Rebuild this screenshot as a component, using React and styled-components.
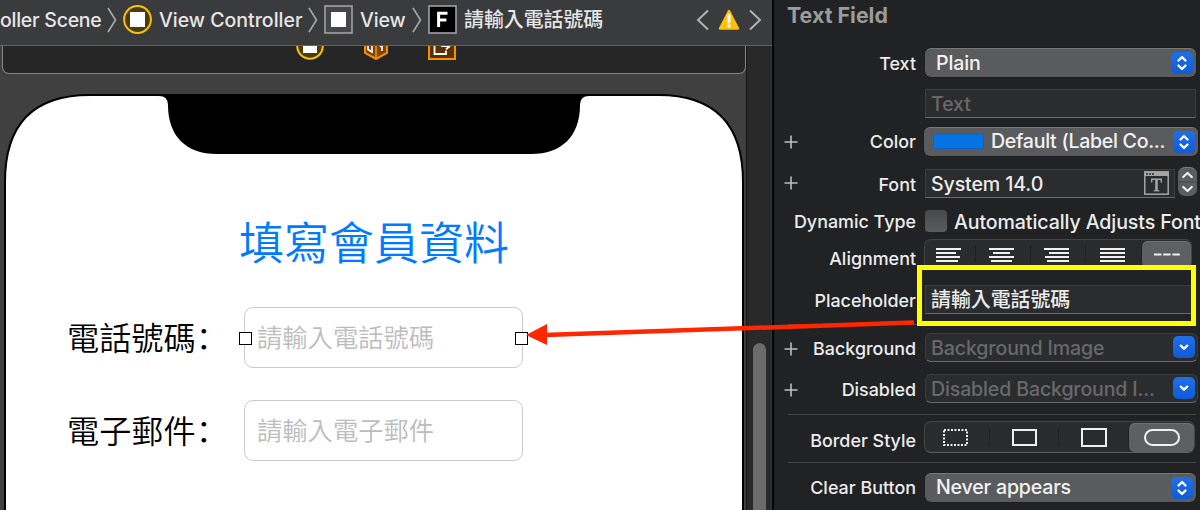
import React from 'react';
import styled, { createGlobalStyle } from 'styled-components';

const GlobalStyle = createGlobalStyle`
  * { box-sizing: border-box; }
  body { margin: 0; overflow: hidden; background: #202124; font-family: Inter, 'Noto Sans CJK TC', sans-serif; }
`;

// --- DATA ---
const fields = [
  { id: 'phone', label: '電話號碼', placeholder: '請輸入電話號碼', selected: true },
  { id: 'mail', label: '電子郵件', placeholder: '請輸入電子郵件' },
];

const alignments = [
  [[0, 25], [0, 20], [0, 24], [0, 22]],
  [[0, 25], [4, 21], [0, 25], [2, 23]],
  [[0, 25], [5, 25], [1, 25], [3, 25]],
  [[0, 25], [0, 25], [0, 25], [0, 25]],
];

// --- PAGE ---
const Window = styled.div`
  display: flex; width: 1200px; height: 510px; overflow: hidden; position: relative;
`;
const Editor = styled.main`
  display: flex; flex-direction: column; width: 774px; border-right: 2px solid #050505; flex: none;
`;
const Workspace = styled.div`
  display: flex; flex: 1; min-height: 0;
`;
const Gutter = styled.div`
  width: 26px; padding: 297px 5px 0 6px; background: #292929; border-left: 1px solid #161616; border-right: 1px solid #353535;
`;
const ScrollThumb = styled.div`
  height: 220px; border-radius: 8px; background: #6b6b6b;
`;

// --- JUMP BAR ---
const JumpBar = styled.nav`
  display: flex; align-items: center; flex: none; height: 46px; padding-bottom: 6px;
  background: #3a3b3d; border-bottom: 1px solid #606163; color: #e6e6e6;
`;
const Crumb = styled.span`
  width: ${p => p.$width}px; flex: none; white-space: nowrap; font-size: ${p => p.$size || 19.5}px; line-height: 24px; font-weight: 500;
  letter-spacing: ${p => p.$spacing || 0}px;
`;
const Chevron = styled.svg`
  width: 10px; height: 26px; flex: none; margin: 0 ${p => p.$right}px 0 6px; fill: none; stroke: #a9a9aa; stroke-width: 1.6;
`;
const SceneIcon = styled.svg`
  width: 29px; height: 29px; flex: none; margin-right: ${p => p.$gap}px;
`;
const IssueNav = styled.div`
  display: flex; align-items: center; gap: 9px; margin-left: auto; margin-right: 10px;
`;

// --- CANVAS ---
const Canvas = styled.section`
  width: 746px; padding-left: 2px; background: #404040; flex: none;
`;
const Dock = styled.div`
  display: flex; height: 28px; padding-left: 292px; background: #262626; width: 744px;
  border: 1.5px solid #858585; border-top: 0; border-radius: 0 0 7px 7px;
`;
const DockIcon = styled.svg`
  width: 30px; height: 14px; flex: none; margin-right: ${p => p.$gap || 0}px;
`;
const Phone = styled.div`
  position: relative; width: 742px; height: 420px; margin-top: 20px; padding-top: 117px;
`;
const PhoneFrame = styled.svg`
  position: absolute; inset: 0; width: 744px; height: 420px;
`;
const Screen = styled.div`
  position: relative; font-family: 'Noto Sans CJK TC', sans-serif; font-weight: 350;
`;
const Heading = styled.h1`
  margin: 0; padding-left: 237px; height: 96px; font-size: 45px; line-height: 60px; font-weight: 350; color: #007aff; white-space: nowrap;
`;
const FormRow = styled.div`
  display: flex; align-items: center; height: 61px; margin-bottom: 32px; padding-left: 65px;
`;
const FieldLabel = styled.label`
  display: flex; width: 177px; flex: none; padding-bottom: 4px; font-size: 32.2px; line-height: 48px; color: #000; white-space: nowrap;
`;
const Colon = styled.span`
  font-family: 'Noto Sans CJK SC', sans-serif; margin-top: -1px;
`;
const FieldBox = styled.div`
  position: relative; display: flex; align-items: center; width: 279px; height: 61px; padding: 0 0 4px 12px;
  border: 1px solid #cbcbcb; border-radius: 9px; font-size: 25.3px; color: #bcbcbc; white-space: nowrap;
`;
const Handle = styled.span`
  position: absolute; top: 24px; ${p => p.$side}: -6px; width: 13px; height: 13px; background: #fff; border: 1.5px solid #000;
`;

// --- INSPECTOR ---
const Inspector = styled.aside`
  display: flex; flex-direction: column; width: 426px; padding-left: 10px; background: #202224; color: #ececec; flex: none; overflow: hidden;
`;
const SectionTitle = styled.h2`
  height: 42px; margin: 0; padding: 3px 0 0 3px; font-size: 21.4px; line-height: 25px; font-weight: 700; color: #9b9b9b; flex: none;
`;
const Row = styled.div`
  display: flex; align-items: center; height: ${p => p.$height}px; flex: none;
`;
const AddMark = styled.svg`
  width: 14px; height: 14px; flex: none; stroke: #bebebe; stroke-width: 1.6; margin-top: ${p => p.$shift || 0}px;
`;
const RowLabel = styled.span`
  flex: none; width: ${p => (p.$marked ? 118 : 132)}px; text-align: right; white-space: nowrap; font-size: 17.9px; line-height: 24px;
  font-weight: 500; padding-top: ${p => p.$drop ?? 2}px;
`;
const Popup = styled.div`
  display: flex; align-items: center; width: ${p => p.$width || 271}px; height: 29px; margin-left: ${p => p.$left || 9}px; padding: 0 3px 0 11px; flex: none;
  background: #5a5b5d; border-top: 1px solid #79797b; border-radius: 6px; box-shadow: 0 0 1px #000; color: #f2f2f2;
`;
const Value = styled.span`
  flex: 1; min-width: 0; white-space: nowrap; font-size: ${p => p.$size || 19.6}px; line-height: 25px; font-weight: 500;
  letter-spacing: ${p => p.$spacing ?? -0.12}px; padding-top: ${p => p.$drop || 0}px;
`;
const BlueCap = styled.svg`
  width: 22px; height: 22px; flex: none; border-radius: 5px; background: linear-gradient(#1f70e8, #0f5bd5);
  fill: none; stroke: #fff; stroke-width: 2.3; stroke-linecap: round; stroke-linejoin: round;
`;
const Swatch = styled.span`
  width: 51px; height: 15px; flex: none; margin: 0 7px 0 -2px; background: #0573e1; border: 1px solid #0868c8;
`;
const Input = styled.div`
  display: flex; align-items: center; width: ${p => p.$width || 271}px; height: 29px; margin-left: 9px; padding: 0 2px 0 5px; flex: none;
  background: #2b2c2e; border: 1px solid #3c3d3f; border-bottom-color: #6a6a6c; border-radius: ${p => (p.$round ? 6 : 0)}px;
  color: ${p => (p.$dim ? '#68696b' : '#ececec')};
`;
const FontIcon = styled.svg`
  width: 25px; height: 24px; flex: none; margin: 0 3px 2px 0;
`;
const Stepper = styled.svg`
  width: 19px; height: 29px; flex: none; margin: -4px 0 0 3px; border-radius: 7px; background: #5c5d5f; border-top: 1px solid #7b7b7d;
  fill: none; stroke: #eee; stroke-width: 2.2; stroke-linecap: round; stroke-linejoin: round;
`;
const CheckBox = styled.span`
  width: 22px; height: 22px; flex: none; margin: -3px 7px 0 9px; border-radius: 4px; background: linear-gradient(#48494b, #5a5b5d);
`;
const Segments = styled.div`
  display: grid; grid-template-columns: ${p => p.$columns}; width: ${p => p.$width}px; height: ${p => p.$height || 31}px; margin-left: 8px; flex: none;
  background: #2a2b2d; border: 1px solid #434446; border-bottom-color: #606062; border-radius: 7px;
`;
const Segment = styled.div`
  display: flex; align-items: center; justify-content: center; padding-right: ${p => p.$nudge || 0}px; margin: ${p => (p.$active ? 1 : 6)}px 0;
  ${p => p.$active && 'background: #5e5f61; border-radius: 6px; box-shadow: inset 0 1px #727274;'}
  & + & { border-left: ${p => (p.$active ? 0 : 1)}px solid #1f2022; }
`;
const Glyph = styled.svg`
  display: block; flex: none; fill: none; stroke: #f0f0f0; stroke-width: 2;
`;
const Divider = styled.hr`
  width: 408px; height: 1px; margin: ${p => p.$top || 0}px 0 0 4px; border: 0; background: #454648; flex: none;
`;

// --- ANNOTATIONS ---
const Arrow = styled.svg`
  position: absolute; left: 524px; top: 315px; width: 392px; height: 34px;
`;
const Highlight = styled.div`
  position: absolute; left: 917px; top: 265px; width: 279px; height: 61px; border: 5px solid #ffff00;
`;

const Separator = ({ right }) => (
  <Chevron $right={right} viewBox="0 0 10 26"><path d="M1 1 L8.5 13 L1 25" /></Chevron>
);

const UpDown = () => (
  <BlueCap viewBox="0 0 22 22"><path d="M7.5 8.5 L11 5 L14.5 8.5 M7.5 13.5 L11 17 L14.5 13.5" /></BlueCap>
);

const Down = () => (
  <BlueCap viewBox="0 0 22 22"><path d="M7.8 9.6 L11 12.7 L14.2 9.6" /></BlueCap>
);

const Plus = ({ shift }) => (
  <AddMark $shift={shift} viewBox="0 0 14 14"><path d="M7 0.5 V13.5 M0.5 7 H13.5" /></AddMark>
);

const TopBar = () => (
  <JumpBar>
    <Crumb $width={101} $spacing={-0.25}>oller Scene</Crumb>
    <Separator right={6} />
    <SceneIcon $gap={7} viewBox="0 0 29 29">
      <circle cx="14.5" cy="14.5" r="13.4" fill="#4a3d0b" stroke="#f8c010" strokeWidth="2" />
      <rect x="7" y="7" width="15" height="15" fill="#fff" />
    </SceneIcon>
    <Crumb $width={143}>View Controller</Crumb>
    <Separator right={6} />
    <SceneIcon $gap={7} viewBox="0 0 29 29">
      <rect x="1" y="1" width="27" height="27" fill="#46464a" stroke="#a0a0a6" strokeWidth="1.6" />
      <rect x="7" y="7" width="15" height="15" fill="#fff" />
    </SceneIcon>
    <Crumb $width={46} $spacing={-0.15}>View</Crumb>
    <Separator right={6} />
    <SceneIcon $gap={7} viewBox="0 0 29 29">
      <rect x="1" y="1" width="27" height="27" fill="#000" stroke="#a0a0a6" strokeWidth="1.6" />
      <path d="M10.6 22 V8.2 H19.5 M10.6 15 H18.4" fill="none" stroke="#fff" strokeWidth="3" />
    </SceneIcon>
    <Crumb $width={150} $size={19.9}>請輸入電話號碼</Crumb>
    <IssueNav>
      <svg width="13" height="22" viewBox="0 0 13 22" fill="none" stroke="#b4b4b5" strokeWidth="1.9"><path d="M12 1.5 L2 11 L12 20.5" /></svg>
      <svg width="22" height="22" viewBox="0 0 22 22">
        <path d="M11 2 L20 19.5 H2 Z" fill="#ffc00a" stroke="#ffc00a" strokeWidth="2.4" strokeLinejoin="round" />
        <path d="M11 6.5 V13" stroke="#fff" strokeWidth="3" strokeLinecap="round" />
        <circle cx="11" cy="17" r="1.7" fill="#fff" />
      </svg>
      <svg width="13" height="22" viewBox="0 0 13 22" fill="none" stroke="#b4b4b5" strokeWidth="1.9"><path d="M1 1.5 L11 11 L1 20.5" /></svg>
    </IssueNav>
  </JumpBar>
);

const SceneDock = () => (
  <Dock>
    <DockIcon $gap={36} viewBox="0 0 30 14">
      <circle cx="15" cy="0" r="12.8" fill="#4a3d0b" stroke="#f8c010" strokeWidth="2" />
      <rect x="8" y="-8" width="14" height="15" fill="#fff" />
    </DockIcon>
    <DockIcon $gap={36} viewBox="0 0 30 14">
      <path d="M4 -8 V7 L15 13 L26 7 V-8 Z" fill="#7b4400" stroke="#f59000" strokeWidth="2" />
      <path d="M15 0 V12" stroke="#f59000" strokeWidth="1.6" />
      <path d="M7 -1 V3.5 L11 6 V-1 M19 1 L21 -1 V5" fill="none" stroke="#fff" strokeWidth="1.6" />
    </DockIcon>
    <DockIcon viewBox="0 0 30 14">
      <rect x="2" y="-14" width="26" height="27" fill="#5a3100" stroke="#f59000" strokeWidth="2" />
      <path d="M7.5 -2 V8 H19 V4.5 M14 0 H22 M19 3.2 L23 0" fill="none" stroke="#fff" strokeWidth="1.8" />
    </DockIcon>
  </Dock>
);

const Device = () => (
  <Phone>
    <PhoneFrame viewBox="0 0 744 420">
      <path d="M3 430 V88 C3 30 32 1 88 1 H656 C712 1 741 30 741 88 V430 Z" fill="#fff" stroke="#000" strokeWidth="2" />
      <path d="M157 0 V2 Q166 2 166 11 C166 42 184 60 215 60 H529 C560 60 578 42 578 11 Q578 2 587 2 V0 Z" fill="#000" />
    </PhoneFrame>
    <Screen>
      <Heading>填寫會員資料</Heading>
      {fields.map(field => (
        <FormRow key={field.id}>
          <FieldLabel>{field.label}<Colon>：</Colon></FieldLabel>
          <FieldBox>
            {field.placeholder}
            {field.selected && <><Handle $side="left" /><Handle $side="right" /></>}
          </FieldBox>
        </FormRow>
      ))}
    </Screen>
  </Phone>
);

const Attributes = () => (
  <Inspector>
    <SectionTitle>Text Field</SectionTitle>
    <Row $height={41}>
      <RowLabel>Text</RowLabel>
      <Popup><Value>Plain</Value><UpDown /></Popup>
    </Row>
    <Row $height={41}>
      <RowLabel />
      <Input $dim><Value $drop={1}>Text</Value></Input>
    </Row>
    <Row $height={34}>
      <Plus shift={2} />
      <RowLabel $marked>Color</RowLabel>
      <Popup $width={274} $left={8}><Swatch /><Value $spacing={-0.3}>Default (Label Co...</Value><UpDown /></Popup>
    </Row>
    <Row $height={51}>
      <Plus shift={-1} />
      <RowLabel $marked>Font</RowLabel>
      <Input $width={250}>
        <Value $drop={2}>System 14.0</Value>
        <FontIcon viewBox="0 0 25 24">
          <rect x="0.8" y="0.8" width="23.4" height="22.4" fill="none" stroke="#a5a5a5" strokeWidth="1.5" />
          <path d="M1 3 H24" stroke="#a5a5a5" strokeWidth="4" />
          <path d="M2 3 H10" stroke="#2b2c2e" strokeWidth="1.6" strokeDasharray="2 1" />
          <path d="M7.7 11.5 V8.2 H17.3 V11.5" fill="none" stroke="#a5a5a5" strokeWidth="1.4" />
          <path d="M12.5 8 V20" stroke="#a5a5a5" strokeWidth="2.6" />
          <path d="M9.6 19.8 H15.4" stroke="#a5a5a5" strokeWidth="1.2" />
        </FontIcon>
      </Input>
      <Stepper viewBox="0 0 19 28"><path d="M5.2 9 L9.5 5 L13.8 9 M5.2 19 L9.5 23 L13.8 19" /><path d="M0 14 H19" stroke="#454648" strokeWidth="1" /></Stepper>
    </Row>
    <Row $height={26}>
      <RowLabel $drop={0}>Dynamic Type</RowLabel>
      <CheckBox />
      <Value $spacing={-0.11}>Automatically Adjusts Font</Value>
    </Row>
    <Row $height={39}>
      <RowLabel $drop={8}>Alignment</RowLabel>
      <Segments $columns="50px 55px 55px 56px 1fr" $width={268}>
        {alignments.map((lines, i) => (
          <Segment key={i} $nudge={3}>
            <Glyph width="25" height="14" viewBox="0 0 25 14">
              {lines.map(([x1, x2], n) => <path key={n} d={`M${x1} ${1 + n * 4} H${x2}`} />)}
            </Glyph>
          </Segment>
        ))}
        <Segment $active><Glyph width="26" height="3" viewBox="0 0 26 3"><path d="M0 1.5 H26" strokeDasharray="7.4 1.8" /></Glyph></Segment>
      </Segments>
    </Row>
    <Row $height={50}>
      <RowLabel $drop={3}>Placeholder</RowLabel>
      <Input><Value $size={19.9} $spacing={0} $drop={2}>請輸入電話號碼</Value></Input>
    </Row>
    <Divider />
    <Row $height={44}>
      <Plus shift={3} />
      <RowLabel $marked $drop={4}>Background</RowLabel>
      <Input $dim $round $width={273}><Value $drop={2}>Background Image</Value><Down /></Input>
    </Row>
    <Row $height={38}>
      <Plus shift={3} />
      <RowLabel $marked $drop={4}>Disabled</RowLabel>
      <Input $dim $round $width={273}><Value $spacing={-0.16} $drop={2}>Disabled Background I...</Value><Down /></Input>
    </Row>
    <Divider $top={7} />
    <Row $height={44}>
      <RowLabel $drop={8}>Border Style</RowLabel>
      <Segments $columns="64px 69px 70px 1fr" $height={32} $width={271}>
        <Segment $nudge={4}><Glyph width="25" height="17" viewBox="0 0 25 17"><rect x="1" y="1" width="23" height="15" strokeDasharray="2 1.5" /></Glyph></Segment>
        <Segment><Glyph width="25" height="17" viewBox="0 0 25 17"><rect x="1" y="1" width="23" height="15" /></Glyph></Segment>
        <Segment><Glyph width="26" height="19" viewBox="0 0 26 19"><rect x="1" y="1" width="24" height="17" /></Glyph></Segment>
        <Segment $active><Glyph width="36" height="17" viewBox="0 0 36 17"><rect x="1" y="1" width="34" height="15" rx="7.5" /></Glyph></Segment>
      </Segments>
    </Row>
    <Divider $top={3} />
    <Row $height={48}>
      <RowLabel>Clear Button</RowLabel>
      <Popup><Value $spacing={-0.2}>Never appears</Value><UpDown /></Popup>
    </Row>
  </Inspector>
);

export default function App() {
  return (
    <Window>
      <GlobalStyle />
      <Editor>
        <TopBar />
        <Workspace>
          <Canvas>
            <SceneDock />
            <Device />
          </Canvas>
          <Gutter><ScrollThumb /></Gutter>
        </Workspace>
      </Editor>
      <Attributes />
      <Arrow viewBox="0 0 392 34">
        <path d="M20 20 L390 7.5" stroke="#ff2600" strokeWidth="4.5" />
        <path d="M2 20 L23 9 V30 Z" fill="#ff2600" />
      </Arrow>
      <Highlight />
    </Window>
  );
}
